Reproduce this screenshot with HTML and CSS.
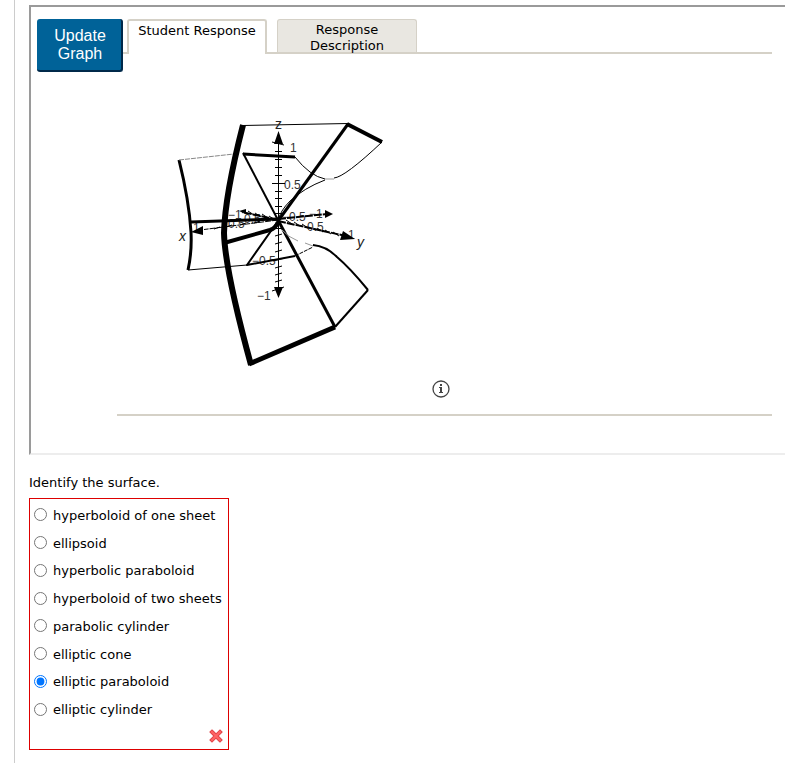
FILE: index.html
```html
<!DOCTYPE html>
<html lang="en">
<head>
<meta charset="utf-8">
<title>Identify the surface</title>
<link rel="stylesheet" href="styles.css">
</head>
<body>
<main class="question">
  <section class="frame">
    <button class="update" type="button">Update Graph</button>
    <div class="panel">
      <div class="tabs" role="tablist">
        <button class="tab tab-active" type="button" role="tab" aria-selected="true">Student Response</button>
        <button class="tab" type="button" role="tab" aria-selected="false">Response Description</button>
      </div>
      <div class="graph">
        <svg class="plot" viewBox="170 110 230 270" role="img" aria-label="Three-dimensional surface plot">
          <g class="ticks">
            <text x="290" y="152">1</text>
            <text x="284" y="189">0.5</text>
            <text x="282" y="221">−0.5</text>
            <text x="309" y="218">−1</text>
            <text x="307" y="231">0.5</text>
            <text x="348" y="239">1</text>
            <text x="228" y="219">−1</text>
            <text x="244" y="223">0.5</text>
            <text x="228" y="228">0.5</text>
            <text x="193" y="232">1</text>
            <text x="252" y="265">−0.5</text>
            <text x="257" y="300">−1</text>
          </g>
          <g fill="none" stroke="#000" stroke-linejoin="round">
            <!-- outer left curve -->
            <path stroke-width="3" d="M179 160Q189 200 191 232Q192 252 188 270"/>
            <path stroke-width="1" stroke="#888" stroke-dasharray="5 1" d="M179 160L234 154"/>
            <path stroke-width="1" d="M188 270L247 265"/>
            <!-- main left curve -->
            <path stroke-width="6" d="M243 125Q225 195 224 233Q225 270 251 365"/>
            <path stroke-width="5" d="M249 364L335 327"/>
            <path stroke-width="3" d="M335 327L278 220"/>
            <path stroke-width="2" d="M278 220L243 153"/>
            <path stroke-width="3" d="M243 154L295 157"/>
            <path stroke-width="1" d="M243 125.500L348 123.500"/>
            <path stroke-width="4" d="M347 124L382 142"/>
            <path stroke-width="3" d="M348 124L278 221"/>
            <path stroke-width="2" d="M278 221L247 265L295 256"/>
            <path stroke-width="3" d="M191 222L278 219"/>
            <path stroke-width="4" d="M224 243L270 230Q276 228 278 222"/>
            <!-- right edges -->
            <path stroke-width="1" d="M295 157Q310 176 325 179M334 178Q345 177 382 142M325 180Q304 188 290 201Q280 211 278 221"/>
            <path stroke-width="1" stroke="#999" d="M325 179H334M282 230Q288 237 298 241M305 243L313 246"/>
            <path stroke-width="1" stroke-dasharray="4 1" d="M295 256L313 247"/>
            <path stroke-width="2" d="M313 245Q326 246 337 257Q350 268 368 290"/>
            <path stroke-width="2" d="M368 290L335 327"/>
            <!-- vertical axis -->
            <path stroke-width="1" d="M278.500 140V292"/>
            <path stroke-width="1" d="M272 142L284 145M275 151.500H282M275 159.500H282M275 167.500H282M275 175.500H282M272 183.500H285M275 191.500H282M275 198.500H282M275 206.500H282M275 213.500H282M275 228.500H282M275 236L282 234M275 244L282 242M275 252L282 250M273 261L285 258M275 268L282 266M275 275L282 273M275 282L282 280M272 291L284 287"/>
            <!-- horizontal axes -->
            <path stroke-width="1" stroke-dasharray="6 1" d="M278 220L204 229.500"/>
            <path stroke-width="2" stroke-dasharray="8 1" d="M278 219L327 214M278 220L242 212M278 221L346 236"/>
            <path stroke-width="1" d="M286 220l6 4M294 222l6 4M302 224l6 4M317 228l6 4M325 230l6 4M333 232l6 4M248 211l6 4M255 213l6 4M262 214l6 4M269 216l6 4M214 229l6-2M226 227l6-2M240 225l6-2M254 223l6-2M266 221l6-2"/>
          </g>
          <path d="M278.500 131L274 144H283ZM278.500 298L274 287H283ZM191 232L203 226L203 235ZM355 239L343 231L340 240ZM333 214L325 210V218ZM239 211L246 209L246 214Z"/>
          <g class="axis-names">
            <text x="275" y="129">z</text>
            <text class="slanted" x="179" y="241">x</text>
            <text class="slanted" x="357" y="247">y</text>
          </g>
        </svg>
        <button class="info" type="button" aria-label="Graph information">
          <svg viewBox="0 0 18 18" width="18" height="18" aria-hidden="true">
            <circle cx="9" cy="9" r="8" fill="none" stroke="#444" stroke-width="1.300"/>
            <path fill="#444" d="M8 4h2v2H8zM7 7h3v5h1v1H7v-1h1V8H7z"/>
          </svg>
        </button>
      </div>
    </div>
  </section>
  <p class="prompt" id="prompt">Identify the surface.</p>
  <form class="answers" aria-labelledby="prompt">
    <div class="choices">
      <label class="choice"><input type="radio" name="surface">hyperboloid of one sheet</label>
      <label class="choice"><input type="radio" name="surface">ellipsoid</label>
      <label class="choice"><input type="radio" name="surface">hyperbolic paraboloid</label>
      <label class="choice"><input type="radio" name="surface">hyperboloid of two sheets</label>
      <label class="choice"><input type="radio" name="surface">parabolic cylinder</label>
      <label class="choice"><input type="radio" name="surface">elliptic cone</label>
      <label class="choice"><input type="radio" name="surface" checked>elliptic paraboloid</label>
      <label class="choice"><input type="radio" name="surface">elliptic cylinder</label>
    </div>
    <svg class="wrong" viewBox="0 0 14 14" width="14" height="14" role="img" aria-label="Incorrect">
      <path d="M3 3L11 11M11 3L3 11" stroke="#e0454a" stroke-width="4" stroke-linecap="square"/>
      <path d="M3 3L11 11M11 3L3 11" stroke="#ff6464" stroke-width="2" stroke-linecap="square"/>
    </svg>
  </form>
</main>
</body>
</html>
```
FILE: styles.css
```css
* {
  box-sizing: border-box;
}

body {
  margin: 0;
  background: #fff;
  color: #000;
  font: 13px/16px Verdana, "DejaVu Sans", sans-serif;
}

.question {
  min-height: 100vh;
  margin-left: 14px;
  padding: 5px 0 13px 14px;
  border-left: 1px solid #ccc;
}

.frame {
  display: flex;
  align-items: flex-start;
  padding: 12px 13px 37px 6px;
  border: 2px solid #9a9a9a;
  border-right: 0;
  border-bottom-color: #ededed;
}

.update {
  position: relative;
  flex: none;
  width: 86px;
  height: 53px;
  margin-right: -6px;
  padding: 0 10px 0 12px;
  border: solid #00294a;
  border-width: 0 2px 2px 0;
  border-radius: 3px;
  background: #006298;
  color: #fff;
  font: 16px/18px "Liberation Sans", Arial, sans-serif;
}

.panel {
  flex: 1;
  min-width: 0;
  border-bottom: 2px solid #d5d1c7;
}

.tabs {
  display: flex;
  gap: 10px;
  height: 35px;
  padding-left: 10px;
  border-bottom: 2px solid #d5d1c7;
}

.tab {
  width: 140px;
  height: 33px;
  padding: 2px 8px 0;
  border: 1px solid #d5d1c7;
  border-bottom: 0;
  border-radius: 3px 3px 0 0;
  background: #e9e7e1;
  color: #000;
  font: inherit;
}

.tab-active {
  height: 35px;
  padding: 0 0 13px;
  border-width: 2px 2px 0;
  background: #fff;
}

.graph {
  display: flex;
  align-items: flex-end;
  gap: 32px;
  padding: 56px 0 16px 53px;
}

.plot {
  flex: none;
  width: 230px;
  height: 270px;
  margin-bottom: 18px;
}

.ticks {
  fill: #333;
  font: 12px "Liberation Sans", Arial, sans-serif;
}

.axis-names {
  fill: #222;
  font: 14px "Liberation Sans", Arial, sans-serif;
}

.slanted {
  font-style: italic;
}

.info {
  display: flex;
  padding: 0;
  border: 0;
  background: none;
}

.prompt {
  margin: 20px 0 7px;
}

.answers {
  width: 200px;
  padding: 3px 4px 6px;
  border: 1px solid #d00;
}

.choices {
  display: grid;
  grid-auto-rows: 1fr;
  height: 222px;
}

.choice {
  display: flex;
  align-items: center;
  gap: 6px;
  white-space: nowrap;
}

.choice input {
  flex: none;
  width: 13px;
  height: 13px;
  margin: 0 0 2px;
}

.wrong {
  display: block;
  margin: 5px 1px 0 auto;
}
```
